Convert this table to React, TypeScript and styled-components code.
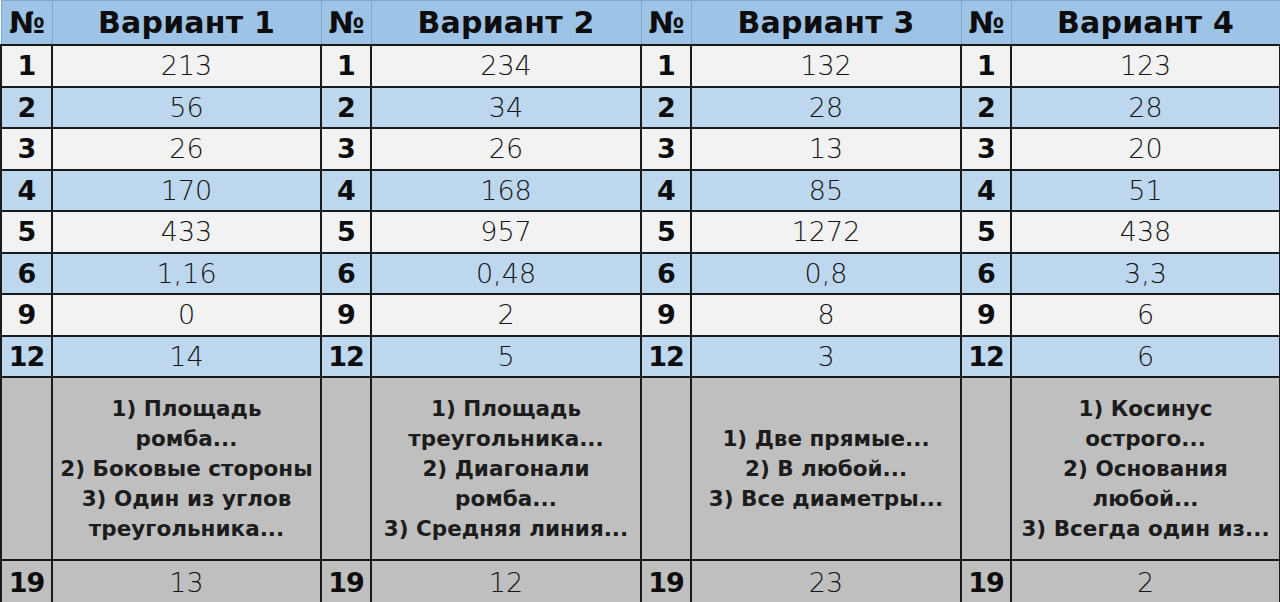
import React from "react";
import styled, { createGlobalStyle } from "styled-components";

const Global = createGlobalStyle`
  html, body {
    margin: 0;
    padding: 0;
    background: #ffffff;
  }
  body {
    font-family: "DejaVu Sans", "Noto Sans", sans-serif;
    color: #111;
  }
`;

const Table = styled.table`
  border-collapse: collapse;
  table-layout: fixed;
  width: 1279px;
`;

const Col = styled.col<{ $w: number }>`
  width: ${(p) => p.$w}px;
`;

const HeadCell = styled.th<{ $num?: boolean }>`
  height: 43px;
  padding: 0;
  background: #9dc3e6;
  border: 1px solid #7fa8cf;
  border-bottom: 2px solid #1a1a1a;
  font-size: ${(p) => (p.$num ? "30px" : "30px")};
  font-weight: 700;
  text-align: center;
  vertical-align: middle;
  letter-spacing: ${(p) => (p.$num ? "-1px" : "0.2px")};
  color: #0d0d0d;
`;

const Row = styled.tr<{ $tone: "light" | "blue" | "gray" }>`
  background: ${(p) =>
    p.$tone === "light" ? "#f2f2f2" : p.$tone === "blue" ? "#bdd7ee" : "#bfbfbf"};
`;

const NumCell = styled.td<{ $tall?: boolean }>`
  padding: 0;
  height: ${(p) => (p.$tall ? "42px" : "39.5px")};
  border: 2px solid #1a1a1a;
  font-size: 27px;
  font-weight: 700;
  text-align: center;
  vertical-align: middle;
  letter-spacing: -1px;
  color: #0d0d0d;
`;

const ValueCell = styled.td`
  padding: 0;
  border: 2px solid #1a1a1a;
  font-size: 27px;
  font-weight: 200;
  text-align: center;
  vertical-align: middle;
  color: #151515;
`;

const TextCell = styled.td`
  padding: 0;
  height: 181px;
  border: 2px solid #1a1a1a;
  font-size: 21.5px;
  font-weight: 700;
  line-height: 30px;
  text-align: center;
  vertical-align: middle;
  color: #1c1c1c;
  white-space: nowrap;
`;

const EmptyCell = styled.td`
  border: 2px solid #1a1a1a;
`;

const rows: { n: string; v: string[] }[] = [
  { n: "1", v: ["213", "234", "132", "123"] },
  { n: "2", v: ["56", "34", "28", "28"] },
  { n: "3", v: ["26", "26", "13", "20"] },
  { n: "4", v: ["170", "168", "85", "51"] },
  { n: "5", v: ["433", "957", "1272", "438"] },
  { n: "6", v: ["1,16", "0,48", "0,8", "3,3"] },
  { n: "9", v: ["0", "2", "8", "6"] },
  { n: "12", v: ["14", "5", "3", "6"] },
];

const notes: string[][] = [
  ["1) Площадь", "ромба...", "2) Боковые стороны", "3) Один из углов", "треугольника..."],
  ["1) Площадь", "треугольника...", "2) Диагонали", "ромба...", "3) Средняя линия..."],
  ["1) Две прямые...", "2) В любой...", "3) Все диаметры..."],
  ["1) Косинус", "острого...", "2) Основания", "любой...", "3) Всегда один из..."],
];

const last = ["13", "12", "23", "2"];
const variants = [0, 1, 2, 3];
const widths = [51, 269, 50, 270, 50, 270, 50, 269];

export default function App() {
  return (
    <>
      <Global />
      <Table>
        <colgroup>
          {widths.map((w, i) => (
            <Col key={i} $w={w} />
          ))}
        </colgroup>
        <thead>
          <tr>
            {variants.map((i) => (
              <React.Fragment key={i}>
                <HeadCell $num>№</HeadCell>
                <HeadCell>Вариант {i + 1}</HeadCell>
              </React.Fragment>
            ))}
          </tr>
        </thead>
        <tbody>
          {rows.map((r, idx) => (
            <Row key={r.n} $tone={idx % 2 === 0 ? "light" : "blue"}>
              {variants.map((i) => (
                <React.Fragment key={i}>
                  <NumCell>{r.n}</NumCell>
                  <ValueCell>{r.v[i]}</ValueCell>
                </React.Fragment>
              ))}
            </Row>
          ))}
          <Row $tone="gray">
            {variants.map((i) => (
              <React.Fragment key={i}>
                <EmptyCell />
                <TextCell>
                  {notes[i].map((line, k) => (
                    <div key={k}>{line}</div>
                  ))}
                </TextCell>
              </React.Fragment>
            ))}
          </Row>
          <Row $tone="gray">
            {variants.map((i) => (
              <React.Fragment key={i}>
                <NumCell $tall>19</NumCell>
                <ValueCell>{last[i]}</ValueCell>
              </React.Fragment>
            ))}
          </Row>
        </tbody>
      </Table>
    </>
  );
}
